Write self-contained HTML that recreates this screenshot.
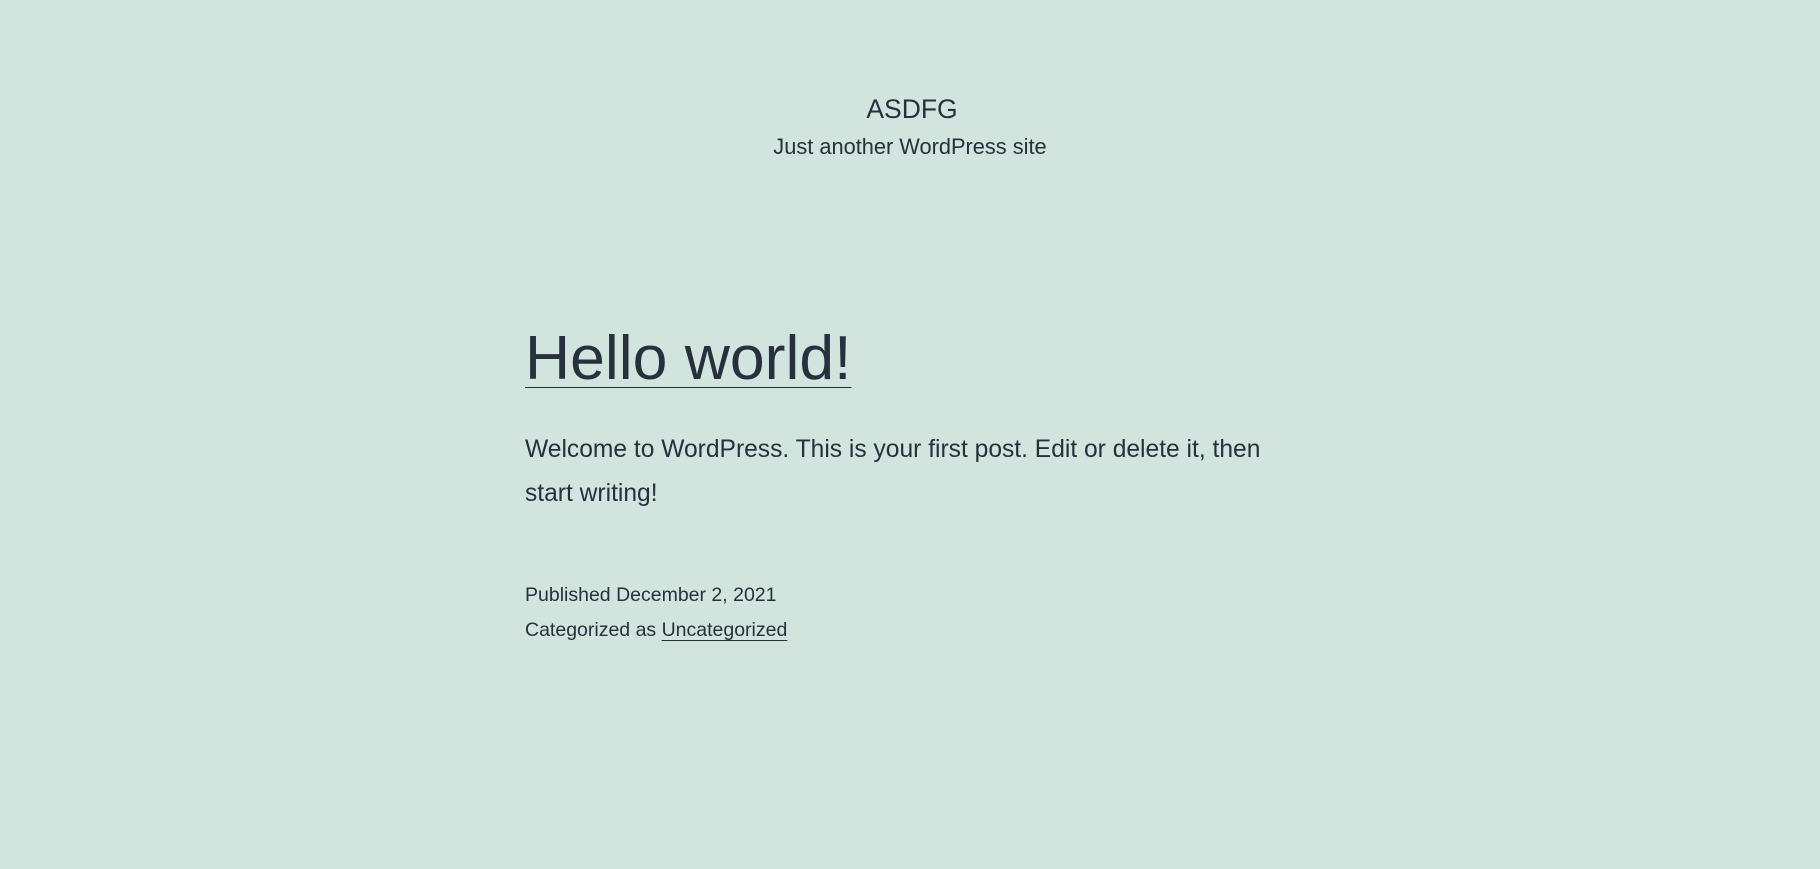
<!DOCTYPE html>
<html><head><meta charset="utf-8"><style>
html,body{margin:0;padding:0;background:#d1e4dd;width:1820px;height:869px;overflow:hidden;color:#28303d;font-family:"Liberation Sans",sans-serif}
.t{position:absolute;left:0;width:1820px;text-align:center;white-space:nowrap}
.a{position:absolute;left:525px;white-space:nowrap}
a{color:#28303d;text-decoration:underline;text-underline-offset:4px;text-decoration-thickness:1px}
</style></head><body>
<div class="t" style="top:92px;font-size:26.5px;line-height:34px;padding-left:2px">ASDFG</div>
<div class="t" style="top:134px;font-size:21.8px;line-height:26px;padding-left:0">Just another WordPress site</div>
<div class="a" style="top:320px;font-size:62.5px;line-height:76px"><a href="#" style="text-underline-offset:8px">Hello world!</a></div>
<div class="a" style="top:428px;font-size:24.6px;line-height:44px">Welcome to WordPress. This is your first post. Edit or delete it, then<br>start writing!</div>
<div class="a" style="top:578px;font-size:19.5px;line-height:35px">Published December 2, 2021<br>Categorized as <a href="#">Uncategorized</a></div>
</body></html>
